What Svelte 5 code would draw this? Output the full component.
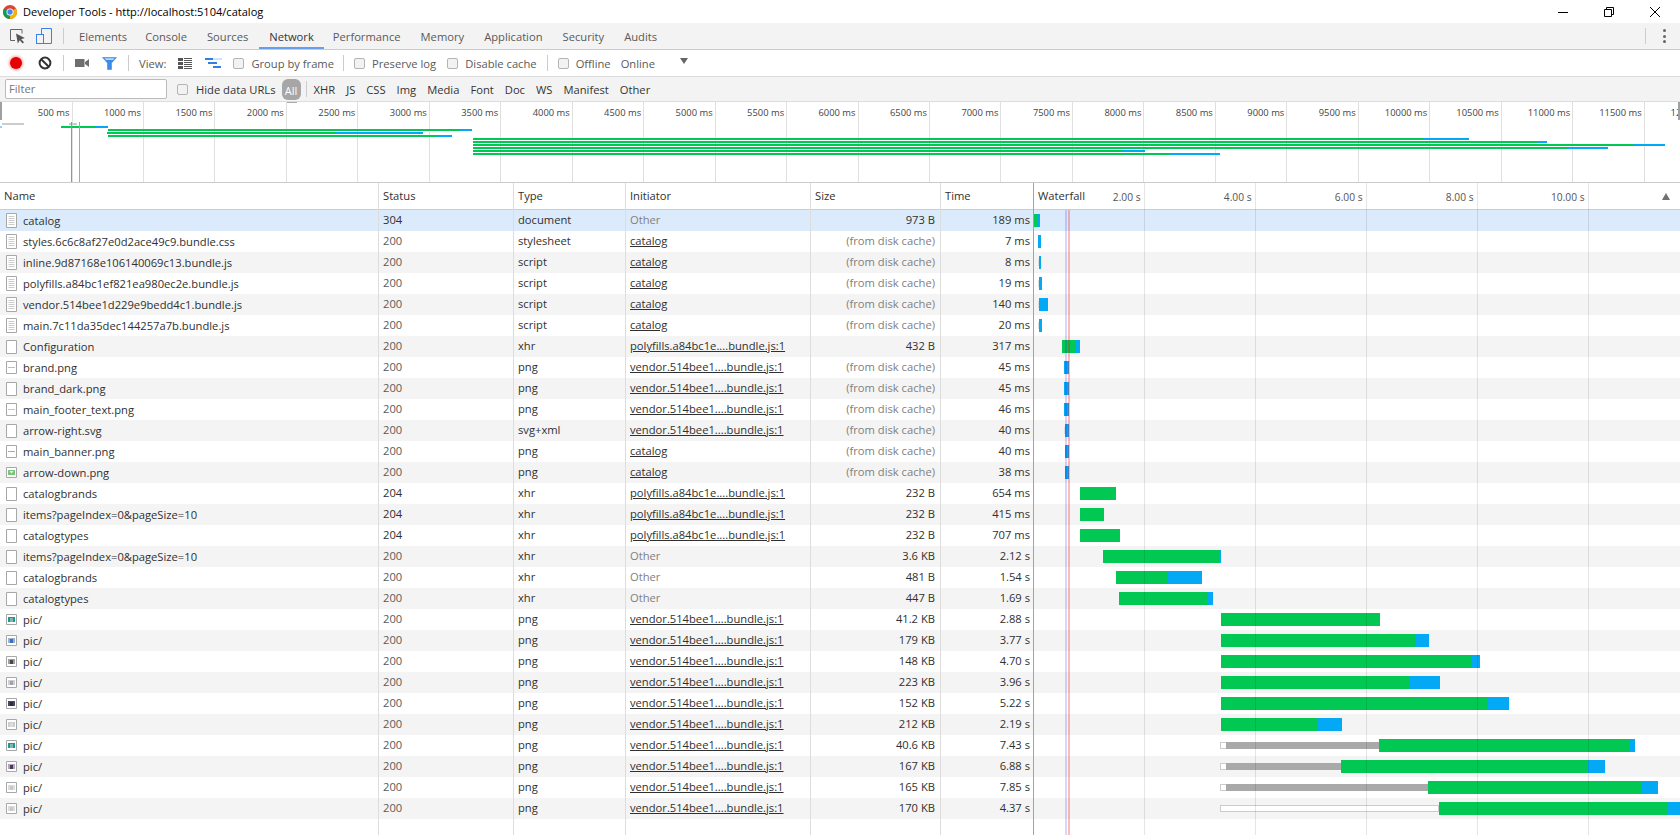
<script>
  const INIT_P = 'polyfills.a84bc1e....bundle.js:1';
  const INIT_V = 'vendor.514bee1....bundle.js:1';
  const G = '#00c853', B = '#03a9f4';
  const rows = [
    ['catalog','304','document','Other',0,'973 B','189 ms','doc',[[1034,1038,G],[1038,1040,B]]],
    ['styles.6c6c8af27e0d2ace49c9.bundle.css','200','stylesheet','catalog',1,'(from disk cache)','7 ms','doc',[[1038,1041,B]]],
    ['inline.9d87168e106140069c13.bundle.js','200','script','catalog',1,'(from disk cache)','8 ms','doc',[[1039,1040,G],[1040,1041,B]],1038],
    ['polyfills.a84bc1ef821ea980ec2e.bundle.js','200','script','catalog',1,'(from disk cache)','19 ms','doc',[[1039,1042,B]],1038],
    ['vendor.514bee1d229e9bedd4c1.bundle.js','200','script','catalog',1,'(from disk cache)','140 ms','doc',[[1039,1048,B]],1038],
    ['main.7c11da35dec144257a7b.bundle.js','200','script','catalog',1,'(from disk cache)','20 ms','doc',[[1039,1042,B]],1038],
    ['Configuration','200','xhr',INIT_P,1,'432 B','317 ms','blank',[[1062,1075,G],[1075,1080,B]]],
    ['brand.png','200','png',INIT_V,1,'(from disk cache)','45 ms','line1',[[1064,1069,B]]],
    ['brand_dark.png','200','png',INIT_V,1,'(from disk cache)','45 ms','blank',[[1064,1069,B]]],
    ['main_footer_text.png','200','png',INIT_V,1,'(from disk cache)','46 ms','line2',[[1064,1069,B]]],
    ['arrow-right.svg','200','svg+xml',INIT_V,1,'(from disk cache)','40 ms','blank',[[1065,1069,B]],1064],
    ['main_banner.png','200','png','catalog',1,'(from disk cache)','40 ms','line3',[[1065,1069,B]]],
    ['arrow-down.png','200','png','catalog',1,'(from disk cache)','38 ms','arrow',[[1065,1069,B]]],
    ['catalogbrands','204','xhr',INIT_P,1,'232 B','654 ms','blank',[[1080,1116,G]]],
    ['items?pageIndex=0&pageSize=10','204','xhr',INIT_P,1,'232 B','415 ms','blank',[[1080,1104,G]]],
    ['catalogtypes','204','xhr',INIT_P,1,'232 B','707 ms','blank',[[1080,1120,G]]],
    ['items?pageIndex=0&pageSize=10','200','xhr','Other',0,'3.6 KB','2.12 s','blank',[[1103,1219,G],[1219,1221,B]]],
    ['catalogbrands','200','xhr','Other',0,'481 B','1.54 s','blank',[[1116,1168,G],[1168,1202,B]]],
    ['catalogtypes','200','xhr','Other',0,'447 B','1.69 s','blank',[[1119,1208,G],[1208,1213,B]]],
    ['pic/','200','png',INIT_V,1,'41.2 KB','2.88 s','#1a9a90|#7fb8b0',[[1221,1380,G]]],
    ['pic/','200','png',INIT_V,1,'179 KB','3.77 s','#9fb0c8|#3a70c0',[[1221,1416,G],[1416,1429,B]]],
    ['pic/','200','png',INIT_V,1,'148 KB','4.70 s','#a0a0a0|#484848',[[1221,1472,G],[1472,1480,B]]],
    ['pic/','200','png',INIT_V,1,'223 KB','3.96 s','#cfcfcf|#a99ab5',[[1221,1410,G],[1410,1440,B]]],
    ['pic/','200','png',INIT_V,1,'152 KB','5.22 s','#4a4a52|#3a2448',[[1221,1488,G],[1488,1509,B]]],
    ['pic/','200','png',INIT_V,1,'212 KB','2.19 s','#cfcfcf|#dcdcdc',[[1221,1318,G],[1318,1342,B]]],
    ['pic/','200','png',INIT_V,1,'40.6 KB','7.43 s','#1a9a90|#7fb8b0',[[1379,1630,G],[1630,1635,B]],null,[1226,1379]],
    ['pic/','200','png',INIT_V,1,'167 KB','6.88 s','#b0a8b8|#4a3560',[[1341,1587,G],[1587,1605,B]],null,[1226,1341]],
    ['pic/','200','png',INIT_V,1,'165 KB','7.85 s','#dcdcdc|#c8c8c8',[[1428,1642,G],[1642,1658,B]],null,[1226,1428]],
    ['pic/','200','png',INIT_V,1,'170 KB','4.37 s','#dcdcdc|#c8c8c8',[[1439,1667,G],[1667,1680,B]],null,[1439,1439]],
  ];
  const WF = 1034;
  const overviewBars = [
    [2,24,123,'#ccc',2],[69,77,123,'#ccc',2],[0,2,126,'#8fd4f0',2],
    [61,95,126,G,2],[95,108,126,B,2],
    [108,460,129,G,2],[460,472,129,B,2],
    [107,335,132,G,2],[335,423,132,B,2],
    [108,438,135,G,2],[438,452,135,B,2],
    [473,1423,138,G,2],[1423,1469,138,B,2],
    [473,1537,141,G,2],[1537,1547,141,B,2],
    [473,1633,144,G,2],[1633,1665,144,B,2],
    [473,1567,147,G,2],[1567,1608,147,B,2],
    [473,1121,150,G,2],[1121,1145,150,B,2],
    [473,1170,153,G,2],[1170,1220,153,B,2],
  ];
  const ticks = Array.from({ length: 24 }, (_, i) => i + 1);
  const wfLines = [1144.5, 1255.5, 1366.5, 1477.5, 1588.5];
  const tabs = ['Elements','Console','Sources','Network','Performance','Memory','Application','Security','Audits'];
  const types = ['XHR','JS','CSS','Img','Media','Font','Doc','WS','Manifest','Other'];
  const picColors = (k) => k.split('|');
</script>

<div class="app">
  <div class="title">
    <svg class="chrome" width="14" height="14" viewBox="0 0 14 14">
      <circle cx="7" cy="7" r="7" fill="#db4437"/>
      <path d="M7 7 L13.06 3.5 A7 7 0 0 1 7 14 Z" fill="#f4b400"/>
      <path d="M7 7 L7 14 A7 7 0 0 1 .94 3.5 Z" fill="#0f9d58"/>
      <circle cx="7" cy="7" r="3.5" fill="#fff"/>
      <circle cx="7" cy="7" r="2.7" fill="#4285f4"/>
    </svg>
    <span class="title-text">Developer Tools - http://localhost:5104/catalog</span>
    <div class="winctl">
      <svg width="10" height="10" viewBox="0 0 10 10"><path d="M0 5.5H10" stroke="#000" fill="none"/></svg>
      <svg width="10" height="10" viewBox="0 0 10 10"><path d="M.5 2.5h7v7h-7z M2.5 2.5v-2h7v7h-2" stroke="#000" fill="none"/></svg>
      <svg width="10" height="10" viewBox="0 0 10 10"><path d="M0 0L10 10M10 0L0 10" stroke="#000" fill="none"/></svg>
    </div>
  </div>

  <div class="tabsbar">
    <svg class="ic-inspect" width="15" height="15" viewBox="0 0 15 15">
      <path d="M12 4.5V.5H.5v11H5" stroke="#666" fill="none"/>
      <path d="M6 4.5l1.8 10 2-3.2 2.8 3.2 1.4-1.2-2.8-3 3.6-1.2z" fill="#555"/>
    </svg>
    <svg class="ic-device" width="16" height="16" viewBox="0 0 16 16">
      <path d="M5.5 6.5V.5h10v15H7.5" stroke="#3b81e8" fill="none"/>
      <rect x=".5" y="6.5" width="7" height="9" stroke="#3b81e8" fill="none"/>
    </svg>
    <span class="sep tabsep"></span>
    {#each tabs as t}
      <span class="tab" class:active={t === 'Network'} class:first={t === 'Elements'}>{t}</span>
    {/each}
    <span class="grow"></span>
    <span class="sep menusep"></span>
    <span class="dots"><i></i><i></i><i></i></span>
  </div>

  <div class="toolbar">
    <span class="record"></span>
    <svg class="block" width="14" height="14" viewBox="0 0 14 14">
      <circle cx="7" cy="7" r="5.4" stroke="#333" stroke-width="2" fill="none"/>
      <path d="M3.2 3.2L10.8 10.8" stroke="#333" stroke-width="2"/>
    </svg>
    <span class="sep s1"></span>
    <svg class="camera" width="14" height="10" viewBox="0 0 14 10"><path d="M0 1h9.5v8H0z M10 4l4-3v8l-4-3z" fill="#6e6e6e"/></svg>
    <svg class="funnel" width="15" height="13" viewBox="0 0 15 13">
      <path d="M.5.5h14L9.5 6v6.500h-4V6z" fill="#3b8be8" stroke="#3b8be8" stroke-width=".6"/>
      <path d="M2.500 1.300h10l-1.500 1.700H4z" fill="#bcd8f6"/>
    </svg>
    <span class="sep s2"></span>
    <span class="lbl view">View:</span>
    <svg class="listic" width="14" height="11" viewBox="0 0 14 11">
      <path d="M0 0h5v3H0zM6 0h8v1H6zM6 2h8v1H6zM0 4h5v3H0zM6 4h8v1H6zM6 6h8v1H6zM0 8h5v3H0zM6 8h8v1H6zM6 10h8v1H6z" fill="#555"/>
    </svg>
    <svg class="wfic" width="17" height="11" viewBox="0 0 17 11">
      <path d="M0 0h17v2H0z" fill="#d0e2fa"/>
      <path d="M0 0h8v2H0zM3 4h9v2H3zM8 8h8v2H8z" fill="#2e80e6"/>
    </svg>
    <span class="cb c1"></span><span class="lbl l1">Group by frame</span>
    <span class="sep s3"></span>
    <span class="cb c2"></span><span class="lbl l2">Preserve log</span>
    <span class="cb c3"></span><span class="lbl l3">Disable cache</span>
    <span class="sep s4"></span>
    <span class="cb c4"></span><span class="lbl l4">Offline</span>
    <span class="lbl l5">Online</span>
    <span class="drop"></span>
  </div>

  <div class="filterbar">
    <div class="filter">Filter</div>
    <span class="cb c5"></span><span class="lbl hide">Hide data URLs</span>
    <span class="all">All</span>
    <span class="sep s5"></span>
    {#each types as t}<span class="type">{t}</span>{/each}
  </div>

  <div class="overview">
    {#each ticks as t}
      <span class="oline" style="left:{(t * 71.46).toFixed(1)}px"></span>
      <span class="olabel" style="right:{(1680 - t * 71.46 + 2).toFixed(1)}px">{t * 500} ms</span>
    {/each}
    {#each overviewBars as b}
      <span class="obar" style="left:{b[0]}px;width:{b[1] - b[0]}px;top:{b[2] - 102}px;height:{b[4]}px;background:{b[3]}"></span>
    {/each}
    <span class="omark blue"></span>
    <span class="omark red"></span>
    <span class="grip gl"></span>
    <span class="grip gr"></span>
    <span class="gtop"></span>
  </div>

  <div class="table">
    <div class="row head">
      <div class="c name">Name</div>
      <div class="c status">Status</div>
      <div class="c type-c">Type</div>
      <div class="c init">Initiator</div>
      <div class="c size">Size</div>
      <div class="c time">Time</div>
      <div class="c wf">
        <span class="wf-title">Waterfall</span>
        {#each wfLines as x, i}
          <span class="wlabel" style="right:{(1680 - x + 4).toFixed(1)}px">{(i + 1) * 2}.00 s</span>
        {/each}
        <span class="sort"></span>
      </div>
    </div>

    {#each rows as r, i}
      <div class="row" class:sel={i === 0} class:alt={i % 2 === 0 && i !== 0}>
        <div class="c name">
          <span class="fi">
            {#if r[7] === 'doc'}
              <svg width="11" height="15" viewBox="0 0 11 15"><path d="M.5.500h10v14H.5z" fill="#fff" stroke="#a8a8a8"/><path d="M2.500 3.500h6M2.500 5.500h6M2.500 7.500h6M2.500 9.500h6M2.500 11.500h6" stroke="#ccc"/></svg>
            {:else if r[7] === 'blank'}
              <svg width="11" height="14" viewBox="0 0 11 14"><path d="M.5.500h10v13H.5z" fill="#fff" stroke="#a8a8a8"/></svg>
            {:else if r[7] === 'line1' || r[7] === 'line2' || r[7] === 'line3'}
              <svg width="11" height="13" viewBox="0 0 11 13"><path d="M.5.500h10v12H.5z" fill="#fff" stroke="#a8a8a8"/><path d="M2 6.500h7" stroke={r[7] === 'line1' ? '#9cc' : r[7] === 'line2' ? '#cdc9a0' : '#aaa'}/></svg>
            {:else if r[7] === 'arrow'}
              <svg width="11" height="11" viewBox="0 0 11 11"><path d="M.5.500h10v10H.5z" fill="#fff" stroke="#a8a8a8"/><path d="M2 3h7v5H2z" fill="#7cc47c"/><path d="M3.500 4h4l-2 2.500z" fill="#e8f4e8"/></svg>
            {:else}
              {@const pc = picColors(r[7])}
              <svg width="11" height="11" viewBox="0 0 11 11"><path d="M.5.500h10v10H.5z" fill="#fff" stroke="#a8a8a8"/><path d="M2 3h7v5H2z" fill={pc[0]}/><path d="M4 4h3v4H4z" fill={pc[1]}/></svg>
            {/if}
          </span>
          <span class="nm">{r[0]}</span>
        </div>
        <div class="c status" class:dim={r[1] === '200'}>{r[1]}</div>
        <div class="c type-c">{r[2]}</div>
        <div class="c init" class:dim={!r[4]} class:link={r[4]}>{r[3]}</div>
        <div class="c size" class:dim={r[5].startsWith('(')}>{r[5]}</div>
        <div class="c time">{r[6]}</div>
        <div class="c wf">
          {#if r[9]}<span class="stub" style="left:{r[9] - WF}px"></span>{/if}
          {#if r[10]}
            <span class="box" style="left:{1220 - WF}px;width:{r[10][1] - 1220}px"></span>
            {#if r[10][1] !== 1439}
              <span class="wait" style="left:{r[10][0] - WF}px;width:{r[10][1] - r[10][0]}px"></span>
            {/if}
          {/if}
          {#each r[8] as b}
            <span class="bar" style="left:{b[0] - WF}px;width:{b[1] - b[0]}px;background:{b[2]}"></span>
          {/each}
        </div>
      </div>
    {/each}

    <div class="lines">
      <span class="vl" style="left:378px"></span>
      <span class="vl" style="left:513px"></span>
      <span class="vl" style="left:625px"></span>
      <span class="vl" style="left:810px"></span>
      <span class="vl" style="left:940px"></span>
      <span class="vl wfb" style="left:1033px"></span>
      {#each wfLines as x}<span class="gl2" style="left:{x - 0.5}px"></span>{/each}
      <span class="mark mb"></span>
      <span class="mark mr"></span>
    </div>
  </div>
</div>

<style>
  :global(body) { margin: 0; background: #fff; }
  .app {
    width: 1680px; height: 835px; overflow: hidden; display: flex; flex-direction: column;
    font-family: "Open Sans", "Liberation Sans", sans-serif; font-size: 11px; color: #303030;
  }
  .title { height: 23px; display: flex; align-items: center; flex: none; background: #fff; }
  .chrome { margin-left: 3px; }
  .title-text { margin-left: 6px; font-size: 11.05px; color: #000; }
  .winctl { margin-left: auto; display: flex; gap: 36px; margin-right: 20px; }

  .tabsbar { height: 26px; flex: none; display: flex; align-items: center; background: #f3f3f3; border-bottom: 1px solid #ccc; }
  .ic-inspect { margin-left: 10px; }
  .ic-device { margin-left: 11px; }
  .sep { display: inline-block; width: 1px; height: 16px; background: #ccc; flex: none; }
  .tabsep { margin-left: 11px; margin-right: 5px; }
  .tab { padding: 0 10px; height: 26px; line-height: 27px; color: #5a5a5a; font-size: 11.2px; box-sizing: border-box; }
  .tab.first { padding-right: 8px; }
  .tab.active { border-bottom: 2px solid #6a9ded; color: #333; margin-left: 1px; margin-right: -1px; }
  .grow { flex: 1; }
  .menusep { margin-right: 17px; }
  .dots { display: flex; flex-direction: column; gap: 2.500px; margin-right: 14px; }
  .dots i { width: 3px; height: 3px; border-radius: 50%; background: #666; display: block; }

  .toolbar { height: 26px; flex: none; display: flex; align-items: center; background: #fff; border-bottom: 1px solid #ddd; }
  .record { width: 12px; height: 12px; border-radius: 50%; background: #e60000; box-shadow: 0 0 3px 1px #f7a0a0; margin-left: 10px; }
  .block { margin-left: 16px; }
  .s1 { margin-left: 11px; }
  .camera { margin-left: 11px; }
  .funnel { margin-left: 13px; }
  .s2 { margin-left: 11px; }
  .lbl { color: #5a5a5a; font-size: 11.2px; white-space: nowrap; }
  .view { margin-left: 10px; }
  .listic { margin-left: 12px; }
  .wfic { margin-left: 13px; }
  .cb { width: 11px; height: 11px; box-sizing: border-box; border: 1px solid #b4b4b4; border-radius: 2px; background: #f2f2f2; flex: none; }
  .c1 { margin-left: 11px; }
  .l1 { margin-left: 7px; }
  .s3 { margin-left: 9px; }
  .c2 { margin-left: 10px; }
  .l2 { margin-left: 7px; }
  .c3 { margin-left: 11px; }
  .l3 { margin-left: 7px; }
  .s4 { margin-left: 10px; }
  .c4 { margin-left: 10px; }
  .l4 { margin-left: 7px; }
  .l5 { margin-left: 10px; }
  .drop { margin-left: 25px; width: 0; height: 0; border-left: 4px solid transparent; border-right: 4px solid transparent; border-top: 6px solid #666; margin-top: -4px; }

  .filterbar { height: 24px; flex: none; display: flex; align-items: center; background: #f3f3f3; border-bottom: 1px solid #ddd; }
  .filter { width: 162px; height: 20px; margin-left: 5px; box-sizing: border-box; border: 1px solid #bbb; border-radius: 2px; background: #fff; padding-left: 3px; line-height: 18px; color: #757575; font-size: 11.2px; }
  .c5 { margin-left: 10px; }
  .hide { margin-left: 8px; color: #333; }
  .all { margin-left: 6px; width: 19px; height: 21px; border-radius: 6px; background: #a6a6a6; color: #fff; text-align: center; line-height: 21px; font-size: 11px; }
  .s5 { margin-left: 5px; margin-right: 2px; }
  .type { margin-left: 5px; color: #333; font-size: 11.2px; margin-right: 6px; line-height: 25px; }
  .filterbar .hide, .filterbar .all { line-height: 23px; }

  .overview { height: 80px; flex: none; position: relative; overflow: hidden; background: #fff; border-bottom: 1px solid #ccc; }
  .oline { position: absolute; top: 0; bottom: 0; width: 1px; background: #e0e0e0; }
  .olabel { position: absolute; top: 4px; font-size: 9.4px; color: #444; white-space: nowrap; }
  .obar { position: absolute; }
  .omark { position: absolute; top: 20px; bottom: 0; width: 1px; }
  .omark.blue { left: 71px; background: #8a8ae8; }
  .omark.red { left: 79px; background: #e88a8a; }
  .grip { position: absolute; top: 0; height: 18px; width: 2px; background: #a0a0a0; }
  .gl { left: 0; }
  .gr { right: 0; }
  .gtop { position: absolute; left: 287px; top: 0; width: 10px; height: 1px; background: #aaa; }

  .table { position: relative; flex: 1; }
  .row { display: grid; grid-template-columns: 379px 134px 112px 185px 130px 94px 646px; height: 21px; line-height: 20px; }
  .row.head { height: 26px; line-height: 26px; border-bottom: 1px solid #ccc; background: #fff; }
  .row.alt { background: #f4f4f4; }
  .row.sel { background: #dcebfb; }
  .c { padding: 0 4px; overflow: hidden; white-space: nowrap; font-size: 11.2px; position: relative; }
  .c.type-c, .c.init { padding-left: 5px; }
  .c.size { text-align: right; padding-right: 5px; }
  .c.time { text-align: right; padding-right: 4px; }
  .head .c.size, .head .c.time { text-align: left; padding-left: 5px; }
  .c.name { display: flex; align-items: center; }
  .head .c.name { display: block; }
  .fi { margin: 0 6px 0 2px; display: flex; flex: none; width: 11px; }
  .dim { color: #808080; }
  .c.status.dim { color: #5a5a5a; }
  .link { text-decoration: underline; color: #303030; }
  .c.wf { padding: 0; overflow: hidden; }
  .wf-title { margin-left: 4px; }
  .wlabel { position: absolute; top: 1px; right: 0; font-size: 10.2px; color: #555; }
  .sort { position: absolute; right: 10px; top: 10px; width: 0; height: 0; border-left: 4px solid transparent; border-right: 4px solid transparent; border-bottom: 7px solid #707070; }
  .bar { position: absolute; top: 4px; height: 13px; }
  .wait { position: absolute; top: 7px; height: 7px; background: #a9a9a9; }
  .box { position: absolute; top: 7px; height: 7px; box-sizing: border-box; border: 1px solid #ccc; background: #fff; }
  .stub { position: absolute; top: 7px; height: 7px; width: 2px; background: #ddd; }
  .lines { position: absolute; inset: 0; pointer-events: none; }
  .vl { position: absolute; top: 0; bottom: 0; width: 1px; background: #ddd; }
  .vl.wfb { background: #a3a3a3; }
  .gl2 { position: absolute; top: 0; bottom: 0; width: 1px; background: rgba(0, 0, 0, 0.1); }
  .mark { position: absolute; top: 27px; bottom: 0; width: 2px; }
  .mb { left: 1065px; background: rgba(0, 0, 255, 0.16); }
  .mr { left: 1068px; background: rgba(255, 0, 0, 0.27); }
</style>
